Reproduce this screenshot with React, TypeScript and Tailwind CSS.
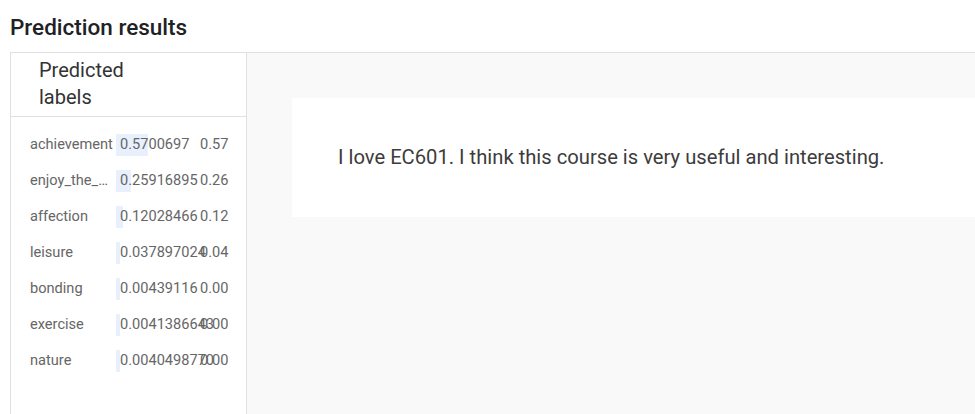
import React from 'react';

const rows = [
  { label: 'achievement', value: '0.5700697', score: '0.57', p: 0.5700697 },
  { label: 'enjoy_the_moment', value: '0.25916895', score: '0.26', p: 0.25916895 },
  { label: 'affection', value: '0.12028466', score: '0.12', p: 0.12028466 },
  { label: 'leisure', value: '0.037897024', score: '0.04', p: 0.037897024 },
  { label: 'bonding', value: '0.00439116', score: '0.00', p: 0.00439116 },
  { label: 'exercise', value: '0.0041386643', score: '0.00', p: 0.0041386643 },
  { label: 'nature', value: '0.0040498770', score: '0.00', p: 0.004049877 },
];

function App() {
  return (
    <div className="w-[975px] h-[414px] overflow-hidden bg-white font-['Roboto',sans-serif]">
      <h1 className="pl-[10px] pt-[13px] h-[52px] text-[22.5px] leading-[28px] font-medium text-[#202124]">
        Prediction results
      </h1>
      <div className="flex ml-[10px] border-t border-[#e0e0e0] h-[362px]">
        <div className="w-[237px] shrink-0 border-l border-r border-[#e0e0e0] bg-white">
          <div className="h-[64px] border-b border-[#e0e0e0] pl-[28px] pt-[4px]">
            <div className="w-[100px] text-[20px] leading-[27px] text-[#333333]">Predicted labels</div>
          </div>
          <div className="pt-[10px]">
            {rows.map((r) => (
              <div key={r.label} className="flex items-center h-[36px] pl-[19px] text-[14.6px] text-[#666666]">
                <div className="w-[86px] truncate pr-[2px]">{r.label}</div>
                <div className="relative w-[84px] h-[22px] flex items-center">
                  <div
                    className="absolute left-0 top-0 h-[22px] bg-[#e8f0fe]"
                    style={{ width: Math.max(4, Math.round(r.p * 56)) }}
                  />
                  <span className="relative pl-[4px] whitespace-nowrap">{r.value}</span>
                </div>
                <div className="relative">{r.score}</div>
              </div>
            ))}
          </div>
        </div>
        <div className="flex-1 bg-[#f9f9f9] pt-[45px] pl-[45px]">
          <div className="h-[119px] bg-white flex items-center pl-[46px] text-[20.2px] text-[#3c3c3c]">
            I love EC601. I think this course is very useful and interesting.
          </div>
        </div>
      </div>
    </div>
  );
}

export default App;
